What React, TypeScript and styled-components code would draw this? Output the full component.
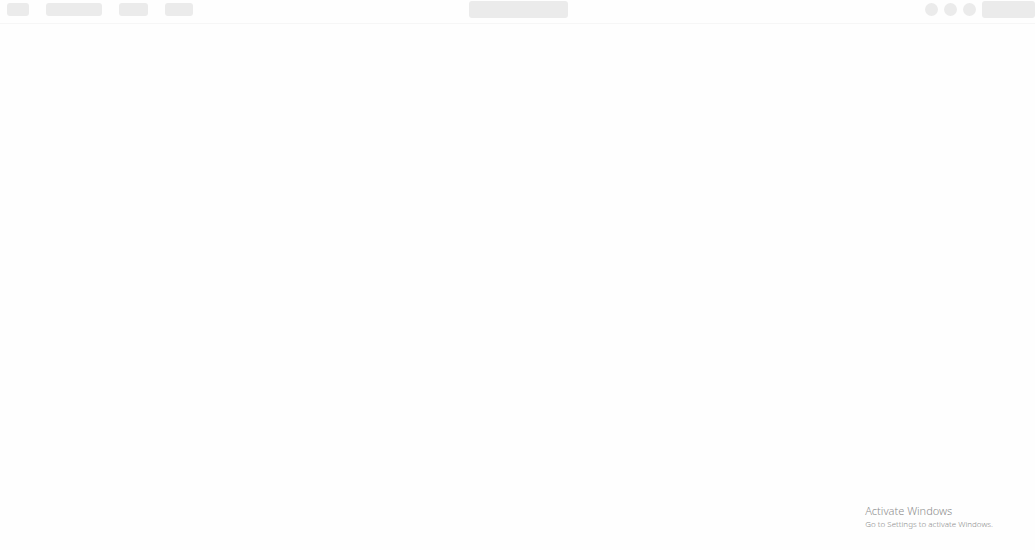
import React from "react";
import styled, { createGlobalStyle } from "styled-components";

const GlobalStyle = createGlobalStyle`
  body {
    margin: 0;
    background: #fefefe;
    font-family: "Noto Sans", "Open Sans", sans-serif;
  }
`;

const Page = styled.div`
  display: flex;
  flex-direction: column;
  min-height: 100vh;
`;

const Header = styled.header`
  display: grid;
  grid-template-columns: 1fr auto 1fr;
  align-items: center;
  padding: 1px 0 5px 2px;
  border-bottom: 1px solid #f6f6f6;
`;

const MenuGroup = styled.div`
  display: flex;
  gap: 17px;
  padding-left: 5px;
`;

const ActionGroup = styled.div`
  display: flex;
  align-items: center;
  justify-content: flex-end;
  gap: 6px;
`;

const Skeleton = styled.div<{ $width: number; $tall?: boolean }>`
  width: ${({ $width }) => $width}px;
  height: ${({ $tall }) => ($tall ? 17 : 13)}px;
  border-radius: 3px;
  background: #ebebeb;
`;

const SkeletonCircle = styled.div`
  width: 13px;
  height: 13px;
  border-radius: 50%;
  background: #ebebeb;
`;

const Content = styled.main`
  flex: 1;
`;

const Notice = styled.aside`
  align-self: flex-end;
  padding: 0 42px 21px 0;
  color: #8c8c8c;
  font-weight: 300;
`;

const NoticeTitle = styled.p`
  margin: 0;
  font-size: 11px;
  line-height: 14px;
`;

const NoticeText = styled.p`
  margin: 0;
  font-size: 8px;
  line-height: 11px;
`;

export default function App() {
  return (
    <Page>
      <GlobalStyle />
      <Header>
        <MenuGroup>
          {[22, 56, 29, 28].map((width) => (
            <Skeleton key={width} $width={width} />
          ))}
        </MenuGroup>
        <Skeleton $width={99} $tall />
        <ActionGroup>
          <SkeletonCircle />
          <SkeletonCircle />
          <SkeletonCircle />
          <Skeleton $width={53} $tall />
        </ActionGroup>
      </Header>
      <Content />
      <Notice>
        <NoticeTitle>Activate Windows</NoticeTitle>
        <NoticeText>Go to Settings to activate Windows.</NoticeText>
      </Notice>
    </Page>
  );
}
